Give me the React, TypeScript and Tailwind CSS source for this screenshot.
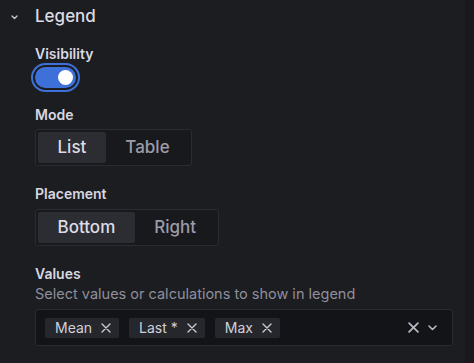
const modeOptions = ["List", "Table"];
const placementOptions = ["Bottom", "Right"];
const values = ["Mean", "Last *", "Max"];

function Cross({ size, color, width }: { size: number; color: string; width: number }) {
  return (
    <svg width={size} height={size} viewBox="0 0 10 10" fill="none">
      <path d="M1 1l8 8M9 1l-8 8" stroke={color} strokeWidth={width} strokeLinecap="round" />
    </svg>
  );
}

function RadioGroup({ options, active }: { options: string[]; active: string }) {
  return (
    <div className="inline-flex self-start rounded-[3px] border border-[#2b2c32] bg-[#18191d] p-[2px]">
      {options.map((opt) => {
        const isActive = opt === active;
        return (
          <div
            key={opt}
            className={`flex h-[31px] items-center rounded-[2px] px-[19.5px] text-[17px] font-medium leading-none ${
              isActive ? "bg-[#2c2d33] text-[#dcdce4]" : "text-[#9c9ca8]"
            }`}
          >
            {opt}
          </div>
        );
      })}
    </div>
  );
}

export default function App() {
  return (
    <div
      className="flex h-[363px] w-[474px] overflow-hidden bg-[#1c1d21] text-[#d0d0da]"
      style={{ fontFamily: "Inter, 'Noto Sans', sans-serif" }}
    >
      <div className="flex flex-1 flex-col pl-[35px] pr-[12px]">
        <div className="relative mt-[6px] flex h-[22px] items-center">
          <svg
            className="absolute left-[-24px] top-[9px]"
            width="7"
            height="5"
            viewBox="0 0 7 5"
            fill="none"
          >
            <path d="M1 1l2.5 2.5L6 1" stroke="#c8c8d2" strokeWidth="1.4" strokeLinecap="round" strokeLinejoin="round" />
          </svg>
          <span className="text-[17px] font-medium text-[#dcdce4]">Legend</span>
        </div>

        <div className="mt-[16px] h-[20px] text-[14px] font-semibold leading-5 text-[#d8d8e0]">Visibility</div>
        <div className="-mt-[1px] flex h-[28px] items-center pl-[0px]">
          <div className="flex h-[21px] w-[41px] items-center justify-end rounded-full bg-[#3d71d9] pr-[3px] ring-2 ring-[#3d71d9] ring-offset-2 ring-offset-[#1c1d21]">
            <div className="h-[15px] w-[15px] rounded-full bg-white" />
          </div>
        </div>

        <div className="mt-[14px] h-[20px] text-[14px] font-semibold leading-5 text-[#d8d8e0]">Mode</div>
        <div className="mt-[4px] flex">
          <RadioGroup options={modeOptions} active="List" />
        </div>

        <div className="mt-[18px] h-[20px] text-[14px] font-semibold leading-5 text-[#d8d8e0]">Placement</div>
        <div className="mt-[5px] flex">
          <RadioGroup options={placementOptions} active="Bottom" />
        </div>

        <div className="mt-[18px] h-[20px] text-[14px] font-semibold leading-5 text-[#d8d8e0]">Values</div>
        <div className="h-[20px] text-[14.5px] leading-5 text-[#8f8f9b]">
          Select values or calculations to show in legend
        </div>
        <div className="mt-[5px] flex h-[37px] items-center rounded-[3px] border border-[#2a2b31] bg-[#131418] pl-[9px] pr-[15px]">
          <div className="flex flex-1 items-center gap-[10px]">
            {values.map((v) => (
              <div
                key={v}
                className="flex h-[20px] items-center gap-[9px] rounded-[2px] bg-[#26272c] pl-[10px] pr-[8px] text-[14px] text-[#d0d0da]"
              >
                <span>{v}</span>
                <Cross size={10} color="#c8c8d2" width={1.4} />
              </div>
            ))}
          </div>
          <Cross size={11} color="#b8b8c4" width={1.6} />
          <svg className="ml-[9px]" width="9" height="6" viewBox="0 0 9 6" fill="none">
            <path d="M1 1l3.5 3.5L8 1" stroke="#b8b8c4" strokeWidth="1.6" strokeLinecap="round" strokeLinejoin="round" />
          </svg>
        </div>
      </div>
      <div className="w-[9px] bg-[#19191d]" />
    </div>
  );
}
